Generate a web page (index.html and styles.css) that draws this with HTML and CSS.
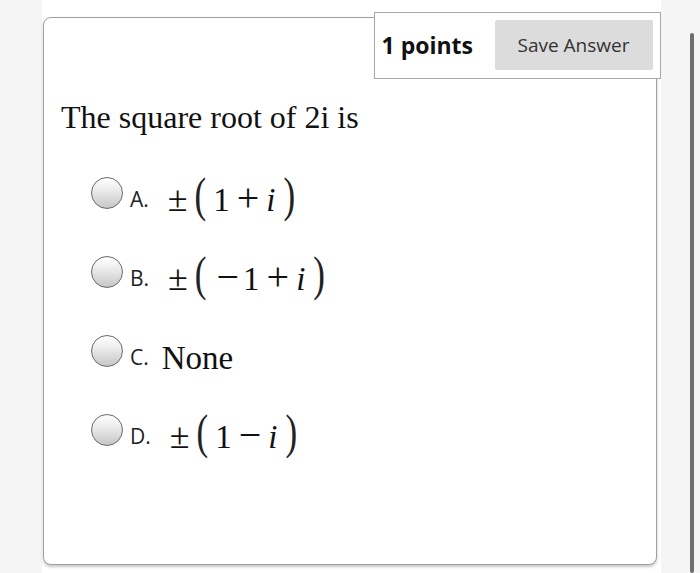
FILE: index.html
```html
<!DOCTYPE html>
<html lang="en">
<head>
<meta charset="utf-8">
<title>Question</title>
<link rel="stylesheet" href="styles.css">
</head>
<body>
  <div class="page">
    <div class="card">
      <div class="points-box">
        <span class="points">1 points</span>
        <button class="save" type="button">Save Answer</button>
      </div>
      <p class="question">The square root of 2i is</p>
      <ul class="options">
        <li class="option">
          <span class="radio"></span>
          <span class="opt-body"><span class="lbl">A.</span><span class="math"><span class="pm">±</span><span class="par open">(</span><span class="n">1</span><span class="op">+</span><span class="v">i</span><span class="par close">)</span></span></span>
        </li>
        <li class="option">
          <span class="radio"></span>
          <span class="opt-body"><span class="lbl">B.</span><span class="math"><span class="pm">±</span><span class="par open">(</span><span class="neg">−</span><span class="n">1</span><span class="op">+</span><span class="v">i</span><span class="par close">)</span></span></span>
        </li>
        <li class="option">
          <span class="radio"></span>
          <span class="opt-body"><span class="lbl">C.</span><span class="text">None</span></span>
        </li>
        <li class="option">
          <span class="radio"></span>
          <span class="opt-body"><span class="lbl">D.</span><span class="math"><span class="pm">±</span><span class="par open">(</span><span class="n">1</span><span class="op">−</span><span class="v">i</span><span class="par close">)</span></span></span>
        </li>
      </ul>
    </div>
  </div>
  <div class="scrollbar"></div>
</body>
</html>
```

FILE: styles.css
```css
html, body {
  margin: 0;
  height: 100%;
}

body {
  display: flex;
  align-items: flex-start;
  background: #f5f5f5;
  overflow: hidden;
  color: #111;
}

.page {
  margin-left: 42px;
  width: 619px;
  height: 573px;
  background: #fff;
}

.card {
  position: relative;
  box-sizing: border-box;
  width: 614px;
  height: 548px;
  margin: 17px 0 0 1px;
  padding: 79px 0 0 17px;
  border: 1.5px solid #a0a0a0;
  border-radius: 8px;
  box-shadow: 0 2px 3px rgba(0, 0, 0, 0.22);
  background: #fff;
}

.points-box {
  position: absolute;
  top: -6.5px;
  left: 329.5px;
  box-sizing: border-box;
  width: 287px;
  height: 67px;
  display: flex;
  align-items: center;
  padding: 0 7px 0 7px;
  border: 1.5px solid #a8a8a8;
  background: #fff;
}

.points {
  font-family: "Open Sans", sans-serif;
  font-weight: 700;
  font-size: 23px;
  color: #111;
}

.save {
  margin-left: auto;
  width: 158px;
  height: 50px;
  border: none;
  border-radius: 2px;
  background: #dcdcdc;
  font-family: "Open Sans", sans-serif;
  font-size: 19px;
  color: #333;
  padding: 0;
}

.question {
  margin: 0;
  font-family: "Liberation Serif", serif;
  font-size: 32px;
  line-height: 40px;
  color: #111;
}

.options {
  list-style: none;
  margin: 16px 0 0 0;
  padding: 0;
}

.option {
  display: flex;
  align-items: center;
  height: 79px;
}

.radio {
  flex: none;
  box-sizing: border-box;
  width: 32px;
  height: 32px;
  margin-left: 30px;
  border-radius: 50%;
  border: 1.5px solid #6a6a6a;
  background: linear-gradient(#ffffff, #ececec 40%, #c6c6c6);
}

.opt-body {
  margin-left: 7px;
  padding-top: 14px;
  font-family: "Liberation Serif", serif;
  font-size: 33px;
  line-height: 40px;
  white-space: nowrap;
  color: #111;
}

.lbl {
  font-family: "Open Sans", sans-serif;
  font-size: 21px;
  color: #222;
  vertical-align: 4px;
  margin-right: 19px;
}

.pm {
  font-size: 36px;
  line-height: 0;
  margin-right: 7px;
}

.par {
  display: inline-block;
  font-size: 35px;
  line-height: 30px;
  color: #222;
  transform: scaleY(1.4);
  vertical-align: 4px;
}

.par.open {
  margin-right: 7px;
}

.par.close {
  margin-left: 8px;
}

.op,
.neg {
  font-size: 40px;
  line-height: 0;
}

.op {
  margin: 0 7px;
}

.neg {
  margin: 0 4px 0 3px;
}

.v {
  font-style: italic;
}

.text {
  margin-left: -6px;
}

.scrollbar {
  flex: none;
  width: 4px;
  height: 540px;
  margin: 33px 0 0 29px;
  border-radius: 2px;
  background: #6e6e6e;
}
```
